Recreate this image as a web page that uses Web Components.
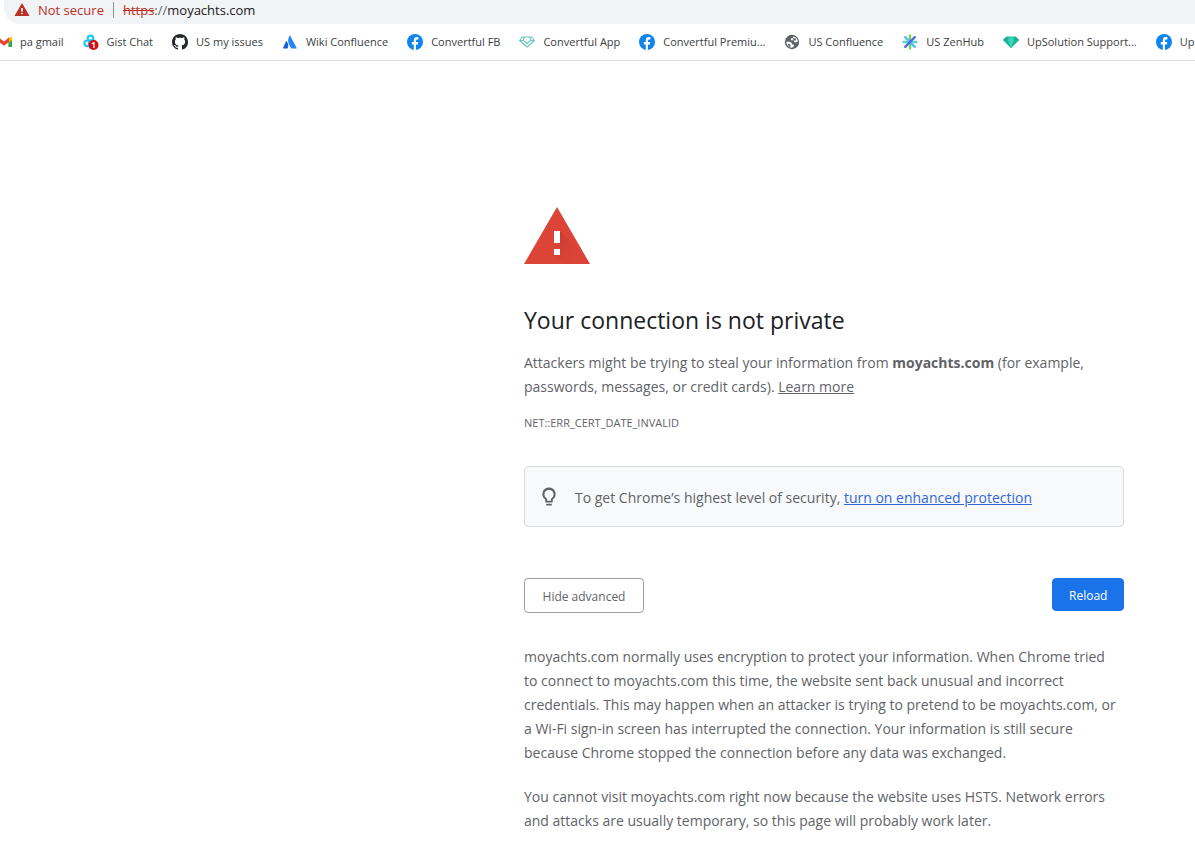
<!DOCTYPE html>
<html lang="en">
<head>
<meta charset="utf-8">
<meta name="viewport" content="width=device-width, initial-scale=1">
<title>Privacy error</title>
<style>
  html { background: #fff; }
  body { margin: 0; font-family: "Open Sans", "Noto Sans", sans-serif; color: #5f6368; overflow-x: hidden; }
</style>
</head>
<body>
<browser-window></browser-window>

<template id="address-bar">
  <style>
    :host { display: flex; height: 24px; overflow: hidden; padding-left: 4px; font-size: 13px; line-height: 20px; }
    .pill { flex: 1; display: flex; align-items: flex-start; padding-left: 10px; background: #f1f3f4; border-bottom-left-radius: 16px; white-space: nowrap; }
    svg { width: 16px; height: 14px; margin: 3px 8px 0 0; }
    .state { color: #b93024; }
    .rule { width: 1px; height: 16px; margin: 2px 9px 0; background: #8f9296; }
    .scheme { color: #b93024; text-decoration: line-through; }
    .sep { color: #5f6368; }
    .url { color: #202124; }
  </style>
  <div class="pill">
    <svg viewBox="0 0 16 14" aria-hidden="true"><path d="M8 0 15.500 13H.5z" fill="#b93024"/><path d="M7.200 5h1.600v3.500H7.200zM7.200 9.700h1.600v1.600H7.200z" fill="#fff"/></svg>
    <span class="state">Not secure</span><span class="rule"></span>
    <span class="url"><span class="scheme">https</span><span class="sep">://</span>moyachts.com</span>
  </div>
</template>

<template id="bookmark-link">
  <style>
    :host { display: block; flex: none; }
    a { display: flex; align-items: center; gap: 8px; color: #3c4043; text-decoration: none; font-size: 11px; line-height: 16px; white-space: nowrap; }
    .icon { display: flex; width: 16px; height: 16px; }
  </style>
  <a href="#"><span class="icon"></span><slot></slot></a>
</template>

<template id="bookmarks-bar">
  <style>
    :host { display: flex; align-items: center; gap: 19px; height: 36px; margin-left: -4px; overflow: hidden; border-bottom: 1px solid #dadce0; }
  </style>
  <slot></slot>
</template>

<template id="enhanced-tip">
  <style>
    :host { display: flex; align-items: center; gap: 14px; box-sizing: border-box; min-height: 61px; padding: 0 12px; border: 1px solid #dadce0; border-radius: 4px; background: #f8f9fa; font-size: 14px; line-height: 24px; }
    svg { width: 24px; height: 24px; flex: none; }
    span { padding-top: 2px; }
    a { color: #3367d6; text-decoration: underline; }
  </style>
  <svg viewBox="0 0 24 24" aria-hidden="true" fill="#5f6368"><path d="M12 2.500a6.600 6.600 0 0 0-3.800 12v2c0 .6.400 1 1 1h5.600c.6 0 1-.4 1-1v-2A6.600 6.600 0 0 0 12 2.500m2.600 10.700-.7.500v2h-3.800v-2l-.7-.5a4.600 4.600 0 1 1 5.200 0M9.200 18.800h5.600v1.700H9.200z"/></svg>
  <span><slot></slot><a href="#">turn on enhanced protection</a></span>
</template>

<template id="action-button">
  <style>
    :host { display: block; }
    button { font: inherit; font-size: 12px; line-height: 16px; box-sizing: border-box; height: 35px; padding: 2px 16px 0; border-radius: 4px; border: 1px solid #9aa0a6; background: #fff; color: #5f6368; width: 120px; white-space: nowrap; }
    :host([primary]) button { width: 72px; height: 33px; background: #1a73e8; border-color: #1a73e8; color: #fff; }
  </style>
  <button type="button"><slot></slot></button>
</template>

<template id="security-warning">
  <style>
    :host { display: block; max-width: 600px; margin: 146px 71px 0 auto; font-size: 14px; line-height: 24px; }
    .alert { display: block; width: 66px; height: 57px; }
    h1 { margin: 40px 0 15px; font-size: 23px; line-height: 32px; font-weight: 400; color: #202124; }
    p { margin: 0; }
    a { color: inherit; text-decoration: underline; }
    .code { margin-top: 16px; font-size: 11px; line-height: 16px; }
    enhanced-tip { margin-top: 35px; }
    .actions { display: flex; justify-content: space-between; align-items: flex-start; margin: 51px 0 32px; }
    .details { padding-right: 4px; }
    .details p + p { margin-top: 20px; }
  </style>
  <svg class="alert" viewBox="0 0 66 57" aria-hidden="true">
    <defs><linearGradient id="shade" x1="0" y1="0" x2="1" y2="1"><stop offset="0" stop-color="#b9382d" stop-opacity=".8"/><stop offset="1" stop-color="#db4437" stop-opacity="0"/></linearGradient></defs>
    <path d="M33 0 66 57H0z" fill="#db4437"/>
    <path d="M36 24 53.500 42V57H40L30 48h6z" fill="url(#shade)"/>
    <path d="M30 24h6v12h-6zM30 42h6v6h-6z" fill="#fff"/>
  </svg>
  <h1>Your connection is not private</h1>
  <p>Attackers might be trying to steal your information from <b>moyachts.com</b> (for example, passwords, messages, or credit cards). <a href="#">Learn more</a></p>
  <p class="code">NET::ERR_CERT_DATE_INVALID</p>
  <enhanced-tip>To get Chrome’s highest level of security, </enhanced-tip>
  <div class="actions"><action-button>Hide advanced</action-button><action-button primary>Reload</action-button></div>
  <div class="details">
    <p>moyachts.com normally uses encryption to protect your information. When Chrome tried to connect to moyachts.com this time, the website sent back unusual and incorrect credentials. This may happen when an attacker is trying to pretend to be moyachts.com, or a Wi-Fi sign-in screen has interrupted the connection. Your information is still secure because Chrome stopped the connection before any data was exchanged.</p>
    <p>You cannot visit moyachts.com right now because the website uses HSTS. Network errors and attacks are usually temporary, so this page will probably work later.</p>
  </div>
</template>

<template id="browser-window">
  <style>:host { display: block; }</style>
  <address-bar></address-bar>
  <bookmarks-bar>
    <bookmark-link icon="gmail">pa gmail</bookmark-link>
    <bookmark-link icon="gist">Gist Chat</bookmark-link>
    <bookmark-link icon="github">US my issues</bookmark-link>
    <bookmark-link icon="atlassian">Wiki Confluence</bookmark-link>
    <bookmark-link icon="facebook">Convertful FB</bookmark-link>
    <bookmark-link icon="gemline">Convertful App</bookmark-link>
    <bookmark-link icon="facebook">Convertful Premiu...</bookmark-link>
    <bookmark-link icon="globe">US Confluence</bookmark-link>
    <bookmark-link icon="zenhub">US ZenHub</bookmark-link>
    <bookmark-link icon="gem">UpSolution Support...</bookmark-link>
    <bookmark-link icon="facebook">Up</bookmark-link>
  </bookmarks-bar>
  <security-warning></security-warning>
</template>

<script>
const ICONS = {
  gmail: '<path d="M0 4v9h3.600V6z" fill="#4285f4"/><path d="M12.400 5.500V13H16V4z" fill="#34a853"/><path d="M12.400 3.500 16 3v3l-3.600 2.700z" fill="#fbbc04"/><path d="M0 3.500 1.500 2.500 8 7.400l5-3.900v4.400L8 11.700 0 6z" fill="#ea4335"/>',
  gist: '<g fill="none" stroke="#23c8ee" stroke-width="2.200"><circle cx="7.500" cy="4.500" r="2.800"/><circle cx="4.200" cy="9.300" r="2.800"/><circle cx="9" cy="9" r="3"/></g><circle cx="10.500" cy="11" r="5" fill="#d50a14"/><text x="10.500" y="14" text-anchor="middle" font-size="8" font-weight="700" font-family="Open Sans" fill="#fff">1</text>',
  github: '<path fill="#24292e" fill-rule="evenodd" d="M8 0C3.580 0 0 3.580 0 8c0 3.540 2.290 6.530 5.470 7.590.4.070.55-.17.55-.38 0-.19-.01-.82-.01-1.490-2.010.37-2.530-.49-2.690-.94-.09-.23-.48-.94-.82-1.130-.28-.15-.68-.52-.01-.53.63-.01 1.080.58 1.230.82.72 1.210 1.870.87 2.330.66.070-.52.280-.87.510-1.070-1.780-.2-3.640-.89-3.640-3.950 0-.87.310-1.590.820-2.150-.08-.2-.36-1.020.08-2.120 0 0 .67-.21 2.200.82.640-.18 1.320-.27 2-.27s1.360.09 2 .27c1.530-1.040 2.200-.82 2.200-.82.440 1.100.160 1.920.080 2.120.510.560.820 1.270.820 2.150 0 3.070-1.870 3.750-3.650 3.950.290.250.540.730.540 1.480 0 1.070-.01 1.930-.01 2.200 0 .21.150.46.550.38A8.010 8.010 0 0 0 16 8c0-4.420-3.580-8-8-8z"/>',
  atlassian: '<path d="M4.700 7.300c-.3-.3-.6-.3-.8.1L1 14c-.1.300.1.500.4.500h4.200c1.200-2.400.8-5.200-.9-7.200z" fill="#1a5ed8"/><path d="M7.500 1.700c-2 3.300-1.600 6.300-.3 8.900l1.900 3.600c.1.200.3.300.5.300h4.700c.3 0 .5-.2.400-.5L8.200 1.800c-.2-.3-.5-.3-.7-.1z" fill="#2684ff"/>',
  facebook: '<circle cx="8" cy="8" r="8" fill="#0f83ee"/><path d="M6.800 16v-5.500h-2V8h2V6.500c0-2.300 1.200-3.400 3-3.400.7 0 1.300.1 1.600.2v2.100h-1c-1.100 0-1.400.6-1.400 1.300V8h2.300l-.4 2.500H9V16z" fill="#fff"/>',
  gemline: '<g fill="none" stroke="#68c5bd" stroke-width="1.100" stroke-linejoin="round"><path d="M3.300 3h9.400l2.700 3.500L8 13 .6 6.500z"/><path d="m.6 6.500 3.400-.3L8 9.500l4-3.300 3.400.3M4 6.200 5.500 3M12 6.200 10.500 3"/></g>',
  globe: '<circle cx="8" cy="8" r="7.200" fill="#5f6368"/><path d="M9.800 2.600 8.400 4.200H7v2h3v2h2l1.800-.5A5.800 5.800 0 0 0 9.800 2.600zM2.300 7.800h3.500l2 1.200v1.400h2v2L8 13.800a5.800 5.800 0 0 1-5.700-6z" fill="#fff"/><path d="M8.600 4.200h3.200v2.400H9.800zM3.800 9.600l2.600.8v2.400H4.800z" fill="#5f6368"/>',
  zenhub: '<g stroke-width="2.400" stroke-linecap="round"><path d="M8 1.500v13" stroke="#79d64c"/><path d="M1.500 8h13" stroke="#5fd4c0"/><path d="m3.200 3.200 9.600 9.600" stroke="#4cc3ef"/><path d="M3.200 12.800 12.800 3.200" stroke="#5269e8"/></g>',
  gem: '<path d="M3.500 2.500h9L16 6l-8 8L0 6z" fill="#20c1a0"/><path d="M0 6h16l-8 8z" fill="#1cb597"/><path d="m5 6 3-3.500L11 6l-3 8z" fill="#3bd8b8"/><path d="M0 6 3.500 2.500 5 6zM11 6l1.500-3.500L16 6z" fill="#1aa892"/>'
};

class TemplateElement extends HTMLElement {
  constructor() {
    super();
    this.attachShadow({ mode: 'open' }).append(document.getElementById(this.localName).content.cloneNode(true));
  }
}

class BookmarkLink extends TemplateElement {
  connectedCallback() {
    this.shadowRoot.querySelector('.icon').innerHTML =
      `<svg width="16" height="16" viewBox="0 0 16 16" aria-hidden="true">${ICONS[this.getAttribute('icon')]}</svg>`;
  }
}

customElements.define('bookmark-link', BookmarkLink);
for (const name of ['address-bar', 'bookmarks-bar', 'enhanced-tip', 'action-button', 'security-warning', 'browser-window'])
  customElements.define(name, class extends TemplateElement {});
</script>
</body>
</html>
